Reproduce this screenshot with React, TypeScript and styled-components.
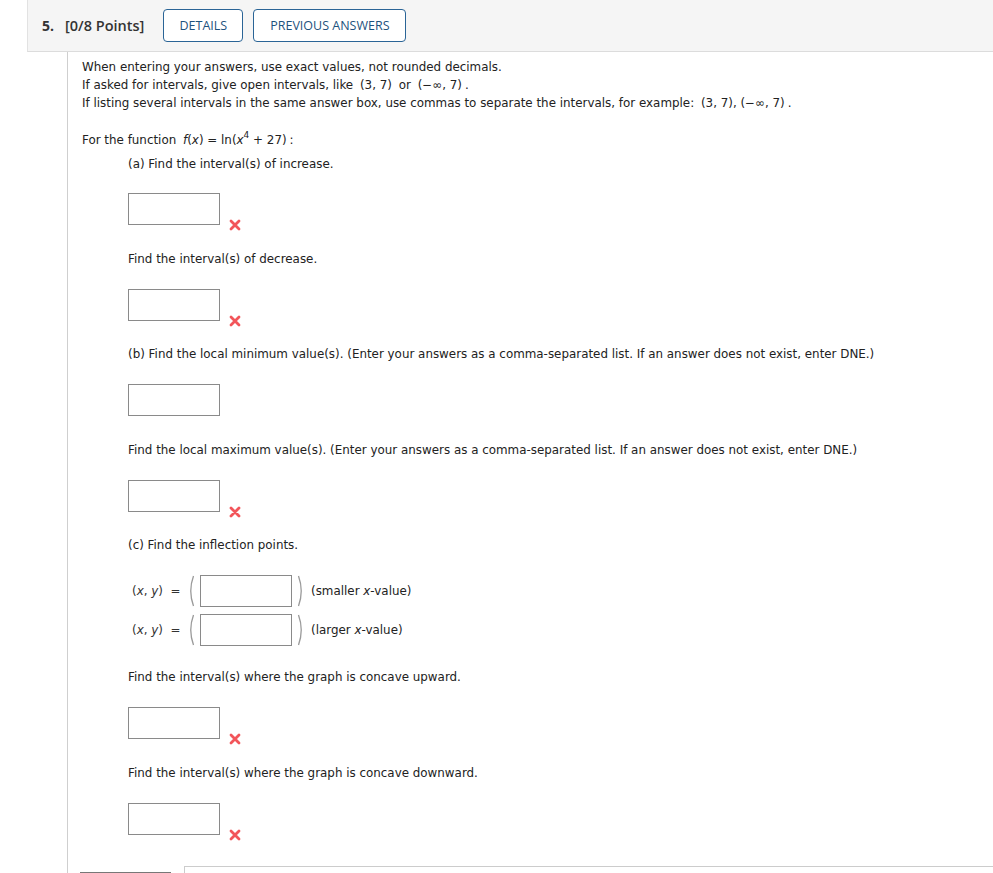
import React from "react";
import styled, { createGlobalStyle } from "styled-components";

const Global = createGlobalStyle`
  html, body { margin: 0; padding: 0; background: #fff; }
  body { font-family: "DejaVu Sans", Verdana, sans-serif; color: #222; overflow: hidden; }
`;

const Page = styled.div`
  padding-left: 27px;
  height: 873px;
  overflow: hidden;
`;

const Header = styled.div`
  height: 51px;
  background: #f5f5f5;
  border-left: 1px solid #e2e2e2;
  border-bottom: 1px solid #dcdcdc;
  display: flex;
  align-items: center;
  padding-left: 14px;
  font-family: "Open Sans", sans-serif;
`;

const QNum = styled.span`
  font-size: 14px;
  font-weight: 700;
  color: #333;
  margin-right: 11px;
`;

const Points = styled.span`
  font-size: 14.5px;
  font-weight: 600;
  color: #333;
  margin-right: 19px;
`;

const HButton = styled.button<{ $w: number }>`
  width: ${(p) => p.$w}px;
  height: 33px;
  margin-right: 10px;
  border: 1px solid #2a6496;
  border-radius: 4px;
  background: #fff;
  color: #1d527d;
  font-family: "Open Sans", sans-serif;
  font-size: 12.5px;
  font-weight: 500;
  padding: 0;
`;

const Body = styled.div`
  margin-left: 40px;
  border-left: 1px solid #cfcfcf;
  padding: 6px 0 0 14px;
  font-size: 11.9px;
  line-height: 18px;
`;

const Line = styled.div<{ $mt?: number; $indent?: boolean }>`
  margin-top: ${(p) => p.$mt ?? 0}px;
  margin-left: ${(p) => (p.$indent ? 46 : 0)}px;
  white-space: nowrap;
  height: 18px;
`;

const I = styled.i`
  font-style: italic;
`;

const Sup = styled.sup`
  font-size: 9px;
  line-height: 0;
  vertical-align: 6px;
`;

const Sp = styled.span`
  margin: 0 3px;
`;

const AnswerRow = styled.div<{ $mt: number }>`
  display: flex;
  align-items: flex-end;
  margin-left: 46px;
  margin-top: ${(p) => p.$mt}px;
  height: 32px;
`;

const Box = styled.div<{ $ml?: number }>`
  width: 90px;
  height: 30px;
  margin-left: ${(p) => p.$ml ?? 0}px;
  border: 1px solid #8a8a8a;
  background: #fff;
`;

const XMark = styled.svg`
  width: 12px;
  height: 12px;
  margin-left: 9px;
  margin-bottom: -6px;
`;

const Wrong = () => (
  <XMark viewBox="0 0 12 12">
    <path d="M2 2 L10 10 M10 2 L2 10" stroke="#f2555a" strokeWidth="2.8" strokeLinecap="round" />
  </XMark>
);

const PointRow = styled.div<{ $mt: number }>`
  display: flex;
  align-items: center;
  margin-left: 46px;
  margin-top: ${(p) => p.$mt}px;
  height: 32px;
`;

const PointLabel = styled.span`
  margin-left: 4px;
  width: 55px;
  color: #333;
  white-space: nowrap;
`;

const Paren = styled.svg<{ $ml?: number }>`
  width: 10px;
  height: 32px;
  margin-left: ${(p) => p.$ml ?? 0}px;
`;

const Note = styled.span`
  margin-left: 6px;
  white-space: nowrap;
`;

const Footer = styled.div`
  display: flex;
  margin-top: 31px;
  margin-left: -2px;
`;

const FootBtn = styled.div`
  width: 91px;
  margin-top: 6px;
  border-top: 2px solid #777;
  height: 10px;
`;

const FootPanel = styled.div`
  flex: 1;
  margin-left: 13px;
  height: 40px;
  border-top: 1px solid #cccccc;
  border-left: 1px solid #cccccc;
`;

const Left = () => (
  <Paren viewBox="0 0 10 32">
    <path d="M6.5 1 Q1 16 6.5 31" stroke="#9a9a9a" strokeWidth="1.3" fill="none" />
  </Paren>
);
const Right = () => (
  <Paren viewBox="0 0 10 32" $ml={3}>
    <path d="M3.5 1 Q9 16 3.5 31" stroke="#9a9a9a" strokeWidth="1.3" fill="none" />
  </Paren>
);

const Answer = ({ mt, wrong }: { mt: number; wrong?: boolean }) => (
  <AnswerRow $mt={mt}>
    <Box />
    {wrong && <Wrong />}
  </AnswerRow>
);

const Point = ({ mt, note }: { mt: number; note: React.ReactNode }) => (
  <PointRow $mt={mt}>
    <PointLabel>
      (<I>x</I>, <I>y</I>)&nbsp;&nbsp;=
    </PointLabel>
    <Left />
    <Box $ml={3} />
    <Right />
    <Note>{note}</Note>
  </PointRow>
);

export default function App() {
  return (
    <Page>
      <Global />
      <Header>
        <QNum>5.</QNum>
        <Points>[0/8 Points]</Points>
        <HButton $w={80}>DETAILS</HButton>
        <HButton $w={153}>PREVIOUS ANSWERS</HButton>
      </Header>
      <Body>
        <Line>When entering your answers, use exact values, not rounded decimals.</Line>
        <Line>
          If asked for intervals, give open intervals, like <Sp>(3, 7)</Sp> or <Sp>(−∞, 7)</Sp>.
        </Line>
        <Line>
          If listing several intervals in the same answer box, use commas to separate the intervals, for example:{" "}
          <Sp>(3, 7), (−∞, 7)</Sp>.
        </Line>
        <Line $mt={19}>
          For the function <Sp><I>f</I>(<I>x</I>) = ln(<I>x</I><Sup>4</Sup> + 27)</Sp>:
        </Line>
        <Line $mt={6} $indent>(a) Find the interval(s) of increase.</Line>
        <Answer mt={20} wrong />
        <Line $mt={25} $indent>Find the interval(s) of decrease.</Line>
        <Answer mt={21} wrong />
        <Line $mt={24} $indent>
          (b) Find the local minimum value(s). (Enter your answers as a comma-separated list. If an answer does not exist, enter DNE.)
        </Line>
        <Answer mt={21} />
        <Line $mt={25} $indent>
          Find the local maximum value(s). (Enter your answers as a comma-separated list. If an answer does not exist, enter DNE.)
        </Line>
        <Answer mt={21} wrong />
        <Line $mt={24} $indent>(c) Find the inflection points.</Line>
        <Point mt={21} note={<>(smaller <I>x</I>-value)</>} />
        <Point mt={7} note={<>(larger <I>x</I>-value)</>} />
        <Line $mt={22} $indent>Find the interval(s) where the graph is concave upward.</Line>
        <Answer mt={21} wrong />
        <Line $mt={25} $indent>Find the interval(s) where the graph is concave downward.</Line>
        <Answer mt={21} wrong />
        <Footer>
          <FootBtn />
          <FootPanel />
        </Footer>
      </Body>
    </Page>
  );
}
